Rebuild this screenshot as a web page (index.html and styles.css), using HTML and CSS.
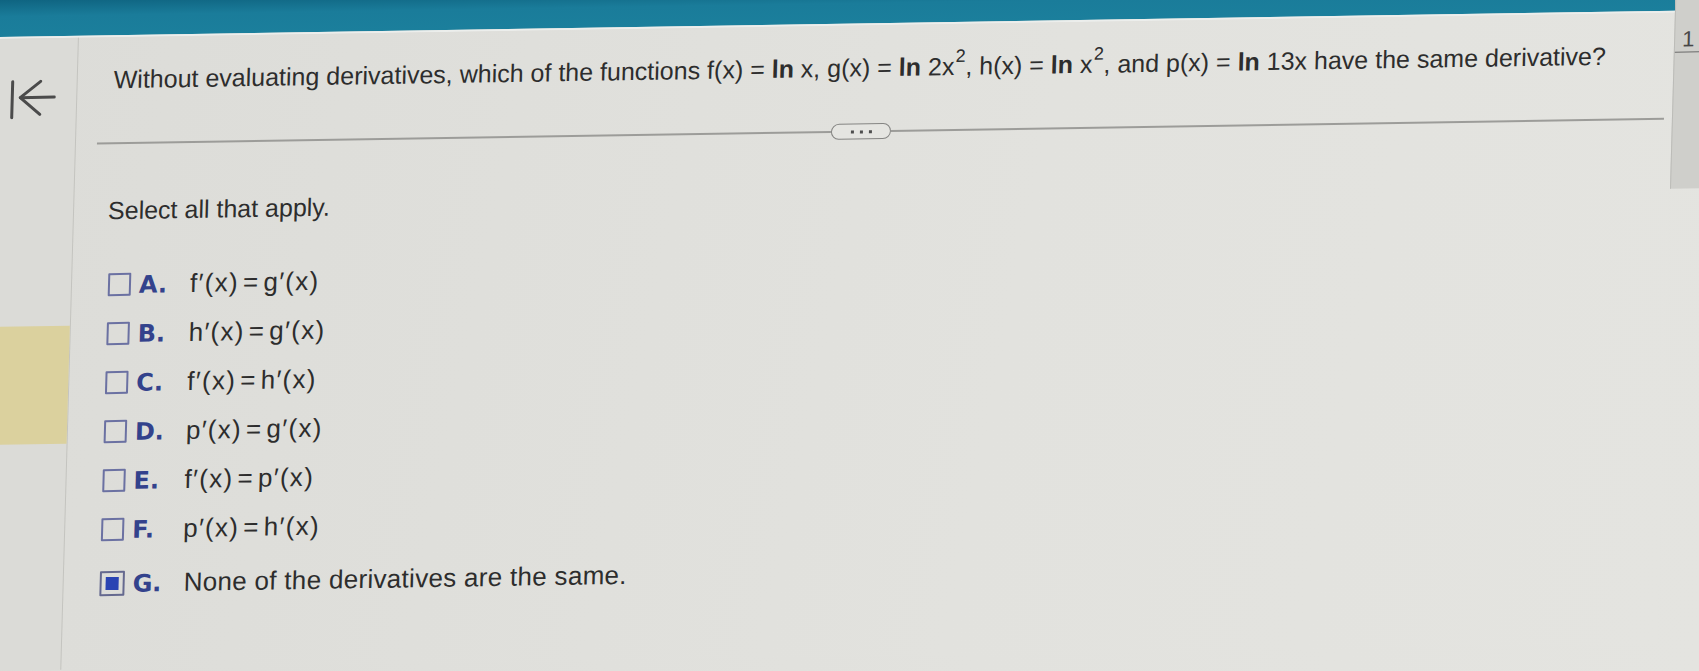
FILE: index.html
```html
<!DOCTYPE html>
<html lang="en">
<head>
<meta charset="utf-8">
<title>Question</title>
<link rel="stylesheet" href="styles.css">
</head>
<body>
<div class="page">
  <div class="main-col">
    <div class="topbar"></div>
    <div class="body">
      <aside class="sidebar">
        <button class="back" aria-label="Back">
          <svg width="50" height="40" viewBox="0 0 50 40" fill="none" stroke="#4b4b4b" stroke-width="3" stroke-linecap="round" stroke-linejoin="round">
            <line x1="3" y1="2" x2="3" y2="38"/>
            <line x1="11" y1="18" x2="45" y2="18"/>
            <polyline points="31,2 11,18 31,35"/>
          </svg>
        </button>
        <div class="flag"></div>
      </aside>
      <main class="content">
        <p class="question">Without evaluating derivatives, which of the functions f(x) = <b>ln</b> x, g(x) = <b>ln</b> 2x<sup>2</sup>, h(x) = <b>ln</b> x<sup>2</sup>, and p(x) = <b>ln</b> 13x have the same derivative?</p>
        <div class="divider">
          <span class="rule rule-left"></span>
          <span class="pill"><i></i><i></i><i></i></span>
          <span class="rule rule-right"></span>
        </div>
        <p class="instr">Select all that apply.</p>
        <ul class="options">
          <li class="opt"><span class="box"></span><span class="lbl">A.</span><span class="math">f′(x)<span class="eq">=</span>g′(x)</span></li>
          <li class="opt"><span class="box"></span><span class="lbl">B.</span><span class="math">h′(x)<span class="eq">=</span>g′(x)</span></li>
          <li class="opt"><span class="box"></span><span class="lbl">C.</span><span class="math">f′(x)<span class="eq">=</span>h′(x)</span></li>
          <li class="opt"><span class="box"></span><span class="lbl">D.</span><span class="math">p′(x)<span class="eq">=</span>g′(x)</span></li>
          <li class="opt"><span class="box"></span><span class="lbl">E.</span><span class="math">f′(x)<span class="eq">=</span>p′(x)</span></li>
          <li class="opt"><span class="box"></span><span class="lbl">F.</span><span class="math">p′(x)<span class="eq">=</span>h′(x)</span></li>
          <li class="opt checked"><span class="box"><span class="fill"></span></span><span class="lbl">G.</span><span class="text">None of the derivatives are the same.</span></li>
        </ul>
      </main>
    </div>
  </div>
  <div class="rail"><div class="rail-top"><span class="rail-num">1</span></div></div>
</div>
</body>
</html>
```
FILE: styles.css
```css
html, body {
  margin: 0;
  height: 100%;
  overflow: hidden;
  background: linear-gradient(100deg, #dcdcd8, #e2e2de 60%, #e4e4e0);
  font-family: "Liberation Sans", Arial, sans-serif;
  color: #2d2d2d;
}

.page {
  display: flex;
  width: 1730px;
  height: 671px;
  transform: skew(-1.6deg, -0.9deg);
  transform-origin: 0 0;
}

.main-col {
  flex: 1;
  display: flex;
  flex-direction: column;
}

.topbar {
  height: 37px;
  flex: none;
  background: linear-gradient(#0f6481, #1a7c9a 45%, #1b7f9c);
  border-bottom: 2px solid #eceeec;
}

.body {
  flex: 1;
  display: flex;
  background: linear-gradient(100deg, #dcdcd8, #e2e2de 60%, #e4e4e0);
}

.sidebar {
  width: 79px;
  flex: none;
  border-right: 1.5px solid #c4c4c0;
  background: #dbdbd7;
  display: flex;
  flex-direction: column;
}

.back {
  margin: 41px 0 0 12px;
  padding: 0;
  width: 50px;
  height: 40px;
  border: 0;
  background: none;
}

.back svg { display: block; }

.flag {
  margin-top: 207px;
  height: 118px;
  background: #dbd19e;
}

.content {
  flex: 1;
  padding-left: 36px;
  padding-right: 8px;
}

.question {
  margin: 27px 0 0;
  font-size: 25px;
  line-height: 30px;
  white-space: nowrap;
}

.question b { font-weight: bold; }

.question sup {
  font-size: 18px;
  line-height: 0;
  vertical-align: 13px;
  margin-left: 1px;
}

.divider {
  margin: 41px 0 0 -15px;
  height: 16px;
  display: flex;
  align-items: center;
}

.rule {
  height: 1.5px;
  background: #9c9c99;
}

.rule-left { width: 734px; flex: none; }
.rule-right { flex: 1; }

.pill {
  flex: none;
  box-sizing: border-box;
  width: 60px;
  height: 16px;
  border: 1.5px solid #858583;
  border-radius: 9px;
  background: #e5e5e1;
  display: flex;
  align-items: center;
  justify-content: center;
  gap: 6px;
}

.pill i {
  width: 3px;
  height: 3px;
  background: #4e4e4e;
}

.instr {
  margin: 44px 0 0 -2px;
  font-size: 25px;
  line-height: 30px;
}

.options {
  list-style: none;
  margin: 35px 0 0;
  padding: 0;
}

.opt {
  height: 49px;
  display: flex;
  align-items: center;
  font-size: 26px;
}

.opt.checked { margin-top: 5px; }

.box {
  box-sizing: border-box;
  width: 23px;
  height: 23px;
  border: 2px solid #6b71a2;
  border-radius: 1px;
  flex: none;
  display: flex;
  align-items: center;
  justify-content: center;
}

.checked .box {
  width: 25px;
  height: 25px;
  border: 2.5px solid #65698f;
}

.fill {
  width: 13px;
  height: 13px;
  background: #2a43b3;
}

.lbl {
  margin-left: 8px;
  width: 51px;
  flex: none;
  font-family: "DejaVu Sans", "Liberation Sans", sans-serif;
  font-size: 24px;
  font-weight: bold;
  color: #33428c;
}

.math { letter-spacing: 1.3px; }

.text { letter-spacing: 0.3px; }

.eq { margin: 0 4px; }

.rail {
  width: 54px;
  flex: none;
}

.rail-top {
  height: 215px;
  background: #cfcfcb;
  border-left: 1px solid #bcbcb8;
}

.rail-num {
  display: block;
  padding-top: 54px;
  padding-left: 7px;
  height: 24px;
  font-size: 22px;
  line-height: 24px;
  color: #474747;
  border-bottom: 1.5px solid #6a6a6a;
}
```
